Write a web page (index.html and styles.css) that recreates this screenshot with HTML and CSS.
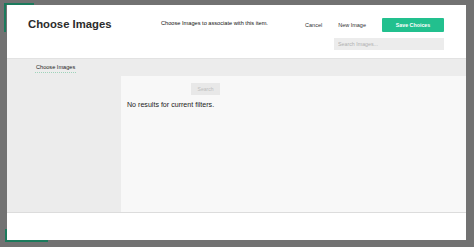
FILE: index.html
```html
<!DOCTYPE html>
<html lang="en">
    <head>
        <meta charset="UTF-8">
        <title>Choose Images</title>
        <link rel="stylesheet" href="styles.css">
    </head>
    <body>
        <div class="corner corner-top"></div>
        <div class="corner corner-bottom"></div>

        <div class="modal">
            <div class="modal-header">
                <h1 class="modal-title">Choose Images</h1>
                <p class="modal-desc">Choose Images to associate with this item.</p>
                <div class="modal-actions">
                    <div class="action-row">
                        <a class="link-btn">Cancel</a>
                        <a class="link-btn">New Image</a>
                        <button class="save-btn">Save Choices</button>
                    </div>
                    <input class="search-input" type="text" placeholder="Search Images...">
                </div>
            </div>

            <div class="tab-bar">
                <span class="tab">Choose Images</span>
            </div>

            <div class="modal-body">
                <div class="sidebar"></div>
                <div class="results">
                    <button class="search-btn" disabled>Search</button>
                    <p class="empty">No results for current filters.</p>
                </div>
            </div>

            <div class="modal-footer"></div>
        </div>
    </body>
</html>
```

FILE: styles.css
```css
body{
    margin: 0;
    background-color: #727272;
    font-family: "Liberation Sans", Arial, sans-serif;
    color: #222;
}

/* green corners peeking out from behind the modal */
.corner{
    position: absolute;
    border-color: #1b7a5c;
    border-style: solid;
}

.corner-top{
    left: 4px;
    top: 3px;
    width: 28px;
    height: 27px;
    border-width: 2px 0 0 2px;
}

.corner-bottom{
    left: 5px;
    top: 229px;
    width: 41px;
    height: 11px;
    border-width: 0 0 2px 2px;
}

.modal{
    position: relative;
    margin: 5px 0 0 7px;
    width: 459px;
    height: 235px;
    background-color: #fff;
    display: flex;
    flex-direction: column;
}

.modal-header{
    height: 53px;
    box-sizing: border-box;
    display: flex;
    align-items: flex-start;
    padding: 12px 22px 0 21px;
}

.modal-title{
    margin: 0;
    width: 133px;
    font-size: 11.3px;
    line-height: 14px;
    font-weight: bold;
    color: #2b2b2b;
}

.modal-desc{
    margin: 2px 0 0;
    font-size: 5.65px;
    line-height: 8px;
    color: #111;
}

.modal-actions{
    margin-left: auto;
    margin-top: 1px;
    display: flex;
    flex-direction: column;
    align-items: flex-end;
}

.action-row{
    display: flex;
    align-items: center;
    gap: 16px;
}

.link-btn{
    font-size: 5.5px;
    color: #333;
}

.save-btn{
    width: 62px;
    height: 14px;
    border: none;
    border-radius: 1px;
    background-color: #22c08e;
    color: #fff;
    font-family: inherit;
    font-size: 5.3px;
    font-weight: bold;
    padding: 0;
}

.search-input{
    margin-top: 6px;
    width: 110px;
    height: 12px;
    box-sizing: border-box;
    border: none;
    background-color: #ececec;
    padding: 0 4px;
    font-family: inherit;
    font-size: 5.3px;
    outline: none;
}

.search-input::placeholder{
    color: #b0b0b0;
}

.tab-bar{
    height: 18px;
    box-sizing: border-box;
    background-color: #ececec;
    border-top: 1px solid #e2e2e2;
    padding: 5px 0 0 28px;
    display: flex;
    align-items: flex-start;
}

.tab{
    font-size: 5.6px;
    line-height: 7px;
    color: #222;
    padding: 0 1px 1px;
    border-bottom: 1px dotted #9fd3bb;
}

.modal-body{
    display: flex;
    height: 136px;
}

.sidebar{
    width: 114px;
    background-color: #ececec;
}

.results{
    flex: 1;
    background-color: #f8f8f8;
    padding: 7px 0 0 6px;
}

.search-btn{
    display: block;
    margin-left: 64px;
    width: 29px;
    height: 12px;
    border: none;
    padding: 0;
    background-color: #e8e8e8;
    color: #bdbdbd;
    font-family: inherit;
    font-size: 5px;
}

.empty{
    margin: 6px 0 0;
    font-size: 7.1px;
    line-height: 9px;
    color: #222;
}

.modal-footer{
    flex: 1;
    border-top: 1px solid #dcdcdc;
}
```
